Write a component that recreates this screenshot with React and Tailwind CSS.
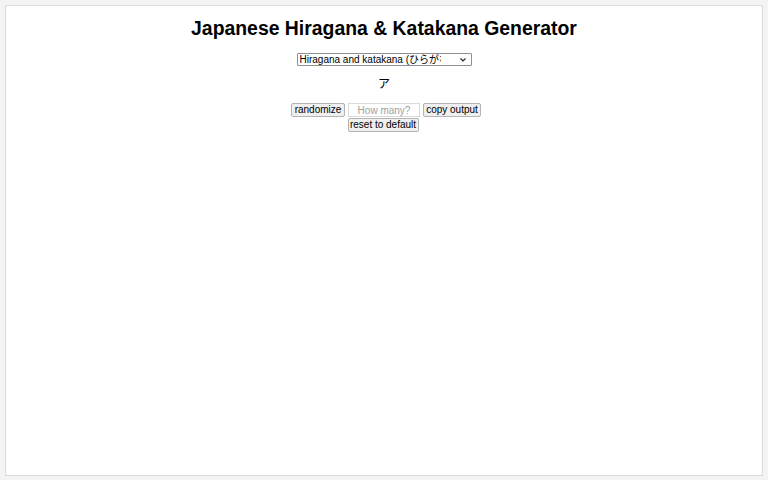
import React, { useState } from 'react'

const FONT = "font-['Liberation_Sans','Noto_Sans_CJK_JP',Arial,sans-serif]"

function App() {
  const [mode, setMode] = useState('both')
  const [count, setCount] = useState('')

  return (
    <div className={`h-screen bg-[#f4f4f4] p-[5px] text-black ${FONT}`}>
      <div className="h-[471px] bg-white border border-[#dcdcdc] flex flex-col items-center">
        {/* Header */}
        <h1 className="mt-[10px] text-[19.4px] leading-[24px] font-bold">
          Japanese Hiragana &amp; Katakana Generator
        </h1>

        {/* Mode */}
        <div className="relative mt-[13px]">
          <select
            value={mode}
            onChange={(e) => setMode(e.target.value)}
            className="block w-[175px] h-[13px] text-[10px] leading-[11px] border border-[#8f8f8f] rounded-[1px] bg-white pl-[2px] pr-[14px] appearance-none"
          >
            <option value="both">Hiragana and katakana (ひらがなとカタカナ)</option>
            <option value="hiragana">Hiragana only (ひらがな)</option>
            <option value="katakana">Katakana only (カタカナ)</option>
          </select>
          <span className="absolute right-[1px] top-[1px] w-[30px] h-[11px] bg-white flex items-center justify-end pr-[5px] pointer-events-none">
            <svg className="w-[6px] h-[4px]" viewBox="0 0 6 4" fill="none">
              <path d="M0.5 0.5 L3 3 L5.5 0.5" stroke="#222" strokeWidth="1.1" />
            </svg>
          </span>
        </div>

        {/* Output */}
        <div className="mt-[11px] h-[14px] text-[12px] leading-[14px]">ア</div>

        {/* Controls */}
        <div className="mt-[12px] ml-[4px] w-[196px] flex flex-wrap justify-center gap-x-[3px] gap-y-[1px]">
          <button className="w-[54px] h-[14px] text-[10px] leading-[12px] bg-[#efefef] border border-[#b4b4b4] rounded-[2px]">
            randomize
          </button>
          <input
            value={count}
            onChange={(e) => setCount(e.target.value)}
            placeholder="How many?"
            className="h-[14px] w-[72px] text-center text-[10px] leading-[12px] border border-[#dadada] placeholder:text-[#a0a0a0]"
          />
          <button className="w-[58px] h-[14px] text-[10px] leading-[12px] bg-[#efefef] border border-[#b4b4b4] rounded-[2px]">
            copy output
          </button>
          <button className="w-[71px] h-[14px] text-[10px] leading-[12px] bg-[#efefef] border border-[#b4b4b4] rounded-[2px] -translate-x-[3px]">
            reset to default
          </button>
        </div>
      </div>
    </div>
  )
}

export default App
